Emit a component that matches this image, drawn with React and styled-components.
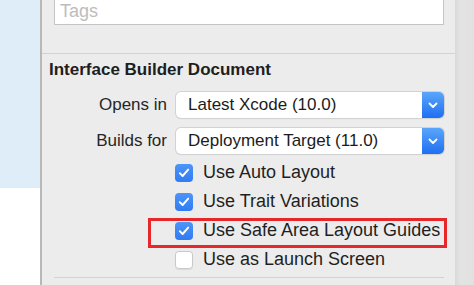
import React from "react";
import styled, { createGlobalStyle } from "styled-components";

const GlobalStyle = createGlobalStyle`
  body {
    margin: 0;
    background: #ffffff;
    font-family: "Liberation Sans", Arial, sans-serif;
    color: #222222;
  }
`;

const Screen = styled.div`
  display: flex;
  width: 474px;
  height: 285px;
  overflow: hidden;
`;

const Sidebar = styled.div`
  width: 40px;
  display: flex;
  flex-direction: column;
  border-right: 2px solid #b8b8b8;
`;

const SidebarTint = styled.div`
  height: 188px;
  background: #deedf7;
`;

const Inspector = styled.div`
  flex: 1;
  background: #ececec;
  display: flex;
  flex-direction: column;
`;

const Gutter = styled.div`
  width: 19px;
  background: linear-gradient(to right, #d9d9d9, #e3e3e3 5px, #e1e1e1);
`;

const TagsSection = styled.div`
  height: 53px;
  padding: 0 11px 0 12px;
  border-bottom: 1px solid #d3d3d3;
`;

const TagsField = styled.div`
  margin-top: -8px;
  height: 33px;
  box-sizing: border-box;
  background: #ffffff;
  border: 1px solid #c4c4c4;
  padding: 7px 5px 0;
  font-size: 18px;
  line-height: 22px;
  color: #bdbdbd;
`;

const SectionTitle = styled.div`
  margin: 6px 0 0 7px;
  font-size: 17px;
  line-height: 20px;
  font-weight: bold;
  color: #1e1e1e;
`;

const Form = styled.div`
  display: grid;
  grid-template-columns: 125px 1fr;
  column-gap: 8px;
  row-gap: 10px;
  margin: 12px 11px 0 0;
  align-items: center;
`;

const Label = styled.div`
  text-align: right;
  font-size: 17px;
  color: #262626;
`;

const Popup = styled.div`
  display: flex;
  height: 26px;
  margin-left: 1px;
  box-sizing: border-box;
  background: #ffffff;
  border-radius: 5px;
  box-shadow: 0 0 0 1px #d2d2d2, 0 1px 1px rgba(0, 0, 0, 0.12);
  overflow: hidden;
`;

const PopupText = styled.div`
  flex: 1;
  padding-left: 12px;
  font-size: 17px;
  line-height: 26px;
  color: #1c1c1c;
  white-space: nowrap;
`;

const PopupArrow = styled.div`
  width: 22px;
  display: flex;
  align-items: center;
  justify-content: center;
  background: linear-gradient(#5aa6fb, #1f6ff2);
`;

const Options = styled.div`
  grid-column: 2;
  display: flex;
  flex-direction: column;
  gap: 10px;
  margin-top: -1px;
`;

const Option = styled.div`
  position: relative;
  display: flex;
  align-items: center;
  gap: 10px;
  height: 19px;
  font-size: 18px;
  color: #1f1f1f;
  white-space: nowrap;
`;

const Box = styled.div`
  width: 18px;
  height: 18px;
  box-sizing: border-box;
  border-radius: 4px;
  display: flex;
  align-items: center;
  justify-content: center;
  background: ${(p) => (p.checked ? "linear-gradient(#4d95f8, #2f7bf3)" : "#ffffff")};
  box-shadow: ${(p) => (p.checked ? "none" : "inset 0 0 0 1px #c9c9c9, 0 1px 1px rgba(0,0,0,0.08)")};
`;

const Highlight = styled.div`
  position: absolute;
  left: -27px;
  right: -3px;
  top: -3px;
  bottom: -8px;
  border: 3px solid #e8272b;
  pointer-events: none;
`;

const Divider = styled.div`
  margin: 8px 11px 0 12px;
  border-top: 1px solid #d2d2d2;
`;

const Chevron = () => (
  <svg width="10" height="7" viewBox="0 0 10 7">
    <path d="M1.5 1.5 L5 5 L8.5 1.5" fill="none" stroke="#fff" strokeWidth="1.8" strokeLinecap="round" strokeLinejoin="round" />
  </svg>
);

const Check = () => (
  <svg width="12" height="10" viewBox="0 0 12 10">
    <path d="M1.8 5.2 L4.6 8 L10.2 1.6" fill="none" stroke="#fff" strokeWidth="1.9" strokeLinecap="round" strokeLinejoin="round" />
  </svg>
);

const options = [
  { label: "Use Auto Layout", checked: true },
  { label: "Use Trait Variations", checked: true },
  { label: "Use Safe Area Layout Guides", checked: true, marked: true },
  { label: "Use as Launch Screen", checked: false },
];

export default function App() {
  return (
    <Screen>
      <GlobalStyle />
      <Sidebar>
        <SidebarTint />
      </Sidebar>
      <Inspector>
        <TagsSection>
          <TagsField>Tags</TagsField>
        </TagsSection>
        <SectionTitle>Interface Builder Document</SectionTitle>
        <Form>
          <Label>Opens in</Label>
          <Popup>
            <PopupText>Latest Xcode (10.0)</PopupText>
            <PopupArrow>
              <Chevron />
            </PopupArrow>
          </Popup>
          <Label>Builds for</Label>
          <Popup>
            <PopupText>Deployment Target (11.0)</PopupText>
            <PopupArrow>
              <Chevron />
            </PopupArrow>
          </Popup>
          <Options>
            {options.map((o) => (
              <Option key={o.label}>
                <Box checked={o.checked}>{o.checked && <Check />}</Box>
                {o.label}
                {o.marked && <Highlight />}
              </Option>
            ))}
          </Options>
        </Form>
        <Divider />
      </Inspector>
      <Gutter />
    </Screen>
  );
}
